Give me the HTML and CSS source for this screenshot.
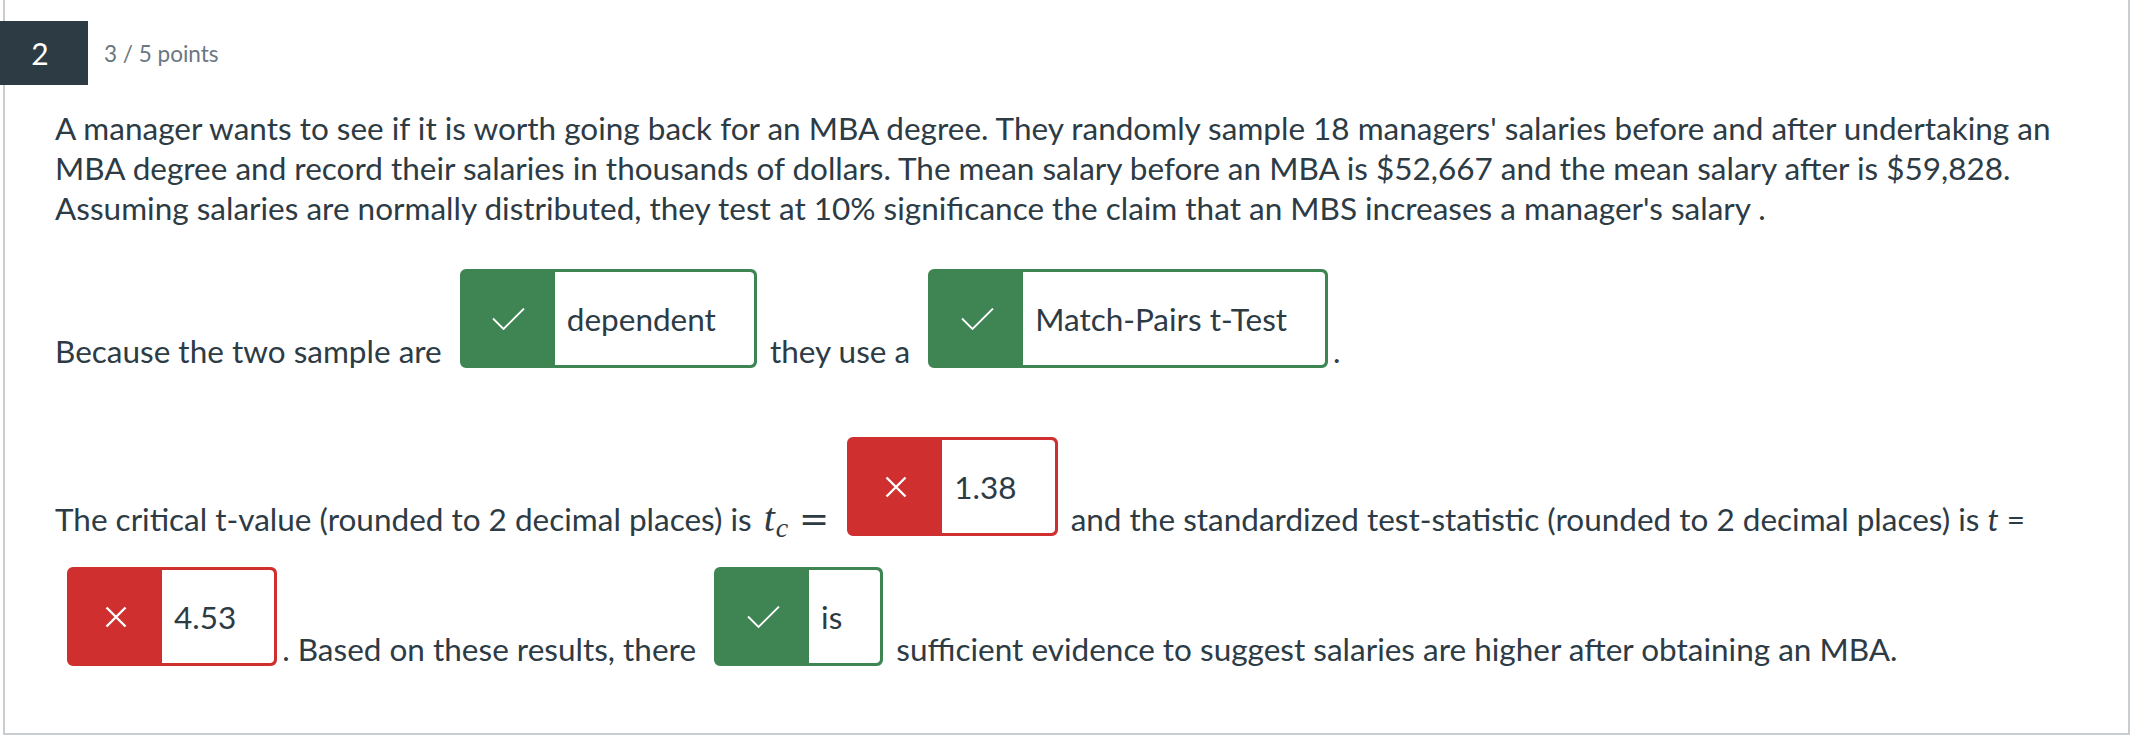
FILE: index.html
```html
<!DOCTYPE html>
<html lang="en">
<head>
<meta charset="utf-8">
<title>Question 2</title>
<link rel="stylesheet" href="styles.css">
</head>
<body>
<div class="card">
  <div class="header">
    <div class="qnum">2</div>
    <div class="points">3 / 5 points</div>
  </div>
  <p class="intro">A manager wants to see if it is worth going back for an MBA degree. They randomly sample 18 managers' salaries before and after undertaking an MBA degree and record their salaries in thousands of dollars. The mean salary before an MBA is $52,667 and the mean salary after is $59,828. Assuming salaries are normally distributed, they test at 10% significance the claim that an MBS increases a manager's salary .</p>
  <p class="row row1">Because the two sample are <span class="ans ok"><span class="ans-in"><span class="mark"><svg class="ico-check" viewBox="0 0 33 22" width="33" height="22"><path d="M1 10.5 L11.5 21 L32 0.5" /></svg></span><span class="val">dependent</span></span></span> they use a <span class="ans ok"><span class="ans-in"><span class="mark"><svg class="ico-check" viewBox="0 0 33 22" width="33" height="22"><path d="M1 10.5 L11.5 21 L32 0.5" /></svg></span><span class="val">Match-Pairs t-Test</span></span></span>.</p>
  <p class="row row2">The critical t-value (rounded to 2 decimal places) is <span class="math"><span class="mi">t</span><span class="msub">c</span><span class="mo">=</span></span> <span class="ans bad"><span class="ans-in"><span class="mark"><svg class="ico-x" viewBox="0 0 22 22" width="22" height="22"><path d="M1.5 1.5 L20.5 20.5 M20.5 1.5 L1.5 20.5" /></svg></span><span class="val">1.38</span></span></span> and the standardized test-statistic (rounded to 2 decimal places) is <i>t</i> =<br><span class="ans bad first"><span class="ans-in"><span class="mark"><svg class="ico-x" viewBox="0 0 22 22" width="22" height="22"><path d="M1.5 1.5 L20.5 20.5 M20.5 1.5 L1.5 20.5" /></svg></span><span class="val">4.53</span></span></span>. Based on these results, there <span class="ans ok"><span class="ans-in"><span class="mark"><svg class="ico-check" viewBox="0 0 33 22" width="33" height="22"><path d="M1 10.5 L11.5 21 L32 0.5" /></svg></span><span class="val">is</span></span></span> sufficient evidence to suggest salaries are higher after obtaining an MBA.</p>
</div>
</body>
</html>
```
FILE: styles.css
```css
html, body {
  margin: 0;
  background: #ffffff;
}

body {
  font-family: Lato, "Noto Sans", sans-serif;
  color: #2d3b45;
}

.card {
  margin: 0 9px 0 3px;
  height: 735px;
  box-sizing: border-box;
  border: 2px solid #c7cdd1;
  border-top: 0;
  padding: 21px 40px 0 50px;
}

.header {
  display: flex;
  align-items: center;
  margin-left: -55px;
}

.qnum {
  width: 88px;
  height: 64px;
  box-sizing: border-box;
  padding-right: 8px;
  background: #2d3b45;
  color: #ffffff;
  font-size: 30px;
  display: flex;
  align-items: center;
  justify-content: center;
}

.points {
  margin-left: 16px;
  font-size: 22.5px;
  color: #6b7780;
}

.intro {
  margin: 23px 0 26px;
  font-size: 31.5px;
  line-height: 40px;
}

.row {
  font-size: 31.5px;
  line-height: 40px;
}

.row1 {
  margin: 0;
}

.row2 {
  margin: 38px 0 0;
}

.ans {
  display: inline-block;
  overflow: hidden;
  vertical-align: -21px;
  margin: 15px 5px 16px 10px;
  border: 3px solid;
  border-radius: 6px;
}

.ans.first {
  margin-left: 12px;
}

.ans.ok {
  border-color: #3e8553;
  background: #3e8553;
}

.ans.bad {
  border-color: #d02f2f;
  background: #d02f2f;
}

.ans-in {
  display: flex;
  height: 93px;
}

.mark {
  width: 92px;
  display: flex;
  align-items: center;
  justify-content: center;
}

.mark svg {
  display: block;
  fill: none;
  stroke: #ffffff;
}

.ico-check {
  stroke-width: 1.8;
}

.ico-x {
  stroke-width: 2.4;
}

.val {
  display: flex;
  align-items: center;
  background: #ffffff;
  padding: 0 38px 0 12px;
  border-radius: 0 4px 4px 0;
  white-space: nowrap;
}

.math {
  font-family: "Liberation Serif", "DejaVu Serif", serif;
  font-size: 40px;
  white-space: nowrap;
  margin-left: 4px;
}

.mi {
  font-style: italic;
}

.msub {
  font-style: italic;
  font-size: 0.7em;
  vertical-align: -0.2em;
  margin-left: 1px;
}

.mo {
  font-family: "DejaVu Serif", serif;
  font-size: 36px;
  margin-left: 0.3em;
}
```
